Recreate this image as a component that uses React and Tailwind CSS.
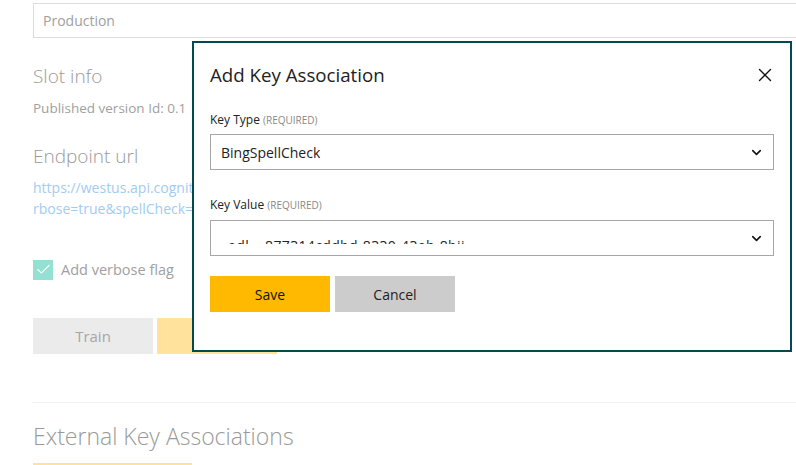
import { ChevronDown, X, Check } from "lucide-react";

const font = { fontFamily: '"Segoe UI", "Open Sans", "Noto Sans", sans-serif' };

const Select = ({ children }) => (
  <div className="flex items-center justify-between h-[36px] border border-[#a6a6a6] pl-[10px] pr-[9px] bg-white">
    <div className="text-[14px] text-[#222] truncate">{children}</div>
    <ChevronDown className="text-[#111] shrink-0" size={15} strokeWidth={2.5} />
  </div>
);

const KeyModal = () => (
  <div className="absolute left-[192px] top-[41px] w-[600px] h-[311px] border-2 border-[#004b50] bg-white px-[16px]">
    <div className="flex items-center justify-between pt-[19px]">
      <h2 className="text-[18.7px] text-[#222] leading-[26px]">Add Key Association</h2>
      <X className="text-[#111] -mr-[2px]" size={22} strokeWidth={1.5} />
    </div>
    <div className="flex flex-col mt-[24px] w-[564px]">
      <label className="text-[12px] text-[#222] leading-[16px]">
        Key Type <span className="text-[10px] text-[#888]">(REQUIRED)</span>
      </label>
      <div className="mt-[6px]">
        <Select>BingSpellCheck</Select>
      </div>
      <label className="text-[12px] text-[#222] leading-[16px] mt-[27px]">
        Key Value <span className="text-[10px] text-[#888]">(REQUIRED)</span>
      </label>
      <div className="mt-[7px]">
        <Select>
          <span className="block h-[12px] overflow-hidden">
            <span className="block pt-[3px] pl-[7px] tracking-wide">edl... 877314cddbd-8330-43eb-8bjj</span>
          </span>
        </Select>
      </div>
      <div className="flex gap-[5px] mt-[20px]">
        <button className="w-[120px] h-[36px] bg-[#ffb900] text-[14px] text-[#111]">Save</button>
        <button className="w-[120px] h-[36px] bg-[#cccccc] text-[14px] text-[#222]">Cancel</button>
      </div>
    </div>
  </div>
);

const App = () => {
  return (
    <div className="relative w-[796px] h-[465px] overflow-hidden bg-white" style={font}>
      <div className="flex flex-col pl-[33px] pt-[3px]">
        <div className="flex items-center justify-between h-[35px] border border-[#dcdcdc] pl-[9px] w-[800px]">
          <span className="text-[14px] text-[#a0a0a0]">Production</span>
          <ChevronDown className="text-[#bbb] mr-[4px]" size={14} />
        </div>
        <h3 className="text-[19px] font-light text-[#9a9a9a] mt-[25px] leading-[26px]">Slot info</h3>
        <p className="text-[13.5px] text-[#a0a0a0] mt-[9px] leading-[20px]">Published version Id: 0.1</p>
        <h3 className="text-[19px] font-light text-[#9a9a9a] mt-[25px] leading-[26px]">Endpoint url</h3>
        <div className="flex flex-col text-[14px] text-[#9fccf3] mt-[8px] leading-[21px] w-[763px] overflow-hidden whitespace-nowrap">
          <span>https://westus.api.cognitive.microsoft.com/luis/v2.0/apps/a7e1c4d2-4b19-4a8e?subscription-key=0f3e&amp;ve</span>
          <span>rbose=true&amp;spellCheck=true&amp;bing-spell-check-subscription-key=</span>
        </div>
        <div className="flex items-center gap-[8px] mt-[40px]">
          <div className="w-[20px] h-[20px] bg-[#94e0d3] flex items-center justify-center">
            <Check className="text-white" size={17} strokeWidth={1.5} />
          </div>
          <span className="text-[14.5px] text-[#a0a0a0]">Add verbose flag</span>
        </div>
        <div className="flex gap-[4px] mt-[37px]">
          <button className="w-[120px] h-[36px] bg-[#ebebeb] text-[15px] text-[#a6a6a6]">Train</button>
          <button className="w-[120px] h-[36px] bg-[#ffe29b] text-[15px] text-[#a6a6a6]">Publish</button>
        </div>
        <div className="h-px bg-[#f0f0f0] mt-[48px] w-[800px]" />
        <h3 className="text-[23px] font-light text-[#9a9a9a] mt-[17px] leading-[32px]">External Key Associations</h3>
        <div className="h-[3px] bg-[#ffe29b] w-[159px] mt-[11px]" />
      </div>
      <KeyModal />
    </div>
  );
};

export default App;
